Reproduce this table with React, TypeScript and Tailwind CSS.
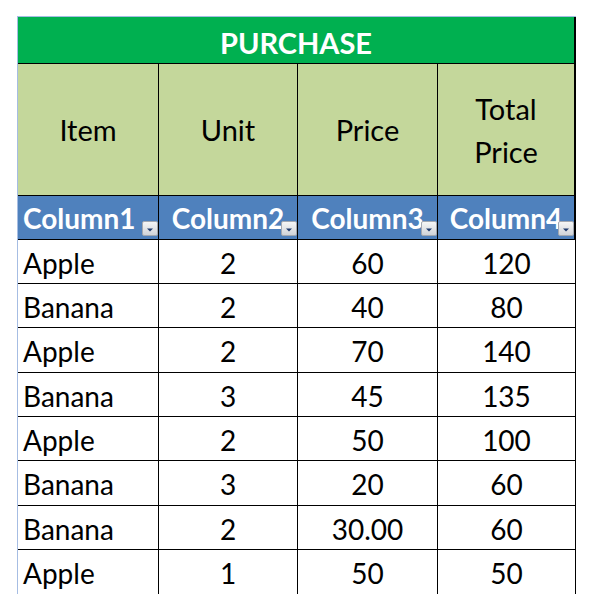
import React from "react";

const rows: [string, string, string, string][] = [
  ["Apple", "2", "60", "120"],
  ["Banana", "2", "40", "80"],
  ["Apple", "2", "70", "140"],
  ["Banana", "3", "45", "135"],
  ["Apple", "2", "50", "100"],
  ["Banana", "3", "20", "60"],
  ["Banana", "2", "30.00", "60"],
  ["Apple", "1", "50", "50"],
];

const heightClasses = [
  "h-[44px] border-b",
  "h-[44px] border-b",
  "h-[45px] border-b",
  "h-[44px] border-b",
  "h-[44px] border-b",
  "h-[45px] border-b",
  "h-[44px] border-b",
  "h-[44px]",
];

function Drop() {
  return (
    <svg
      className="absolute right-0 bottom-[3px]"
      width="16"
      height="15"
      viewBox="0 0 16 15"
    >
      <defs>
        <linearGradient id="dg" x1="0" y1="0" x2="0" y2="1">
          <stop offset="0" stopColor="#f7f7f7" />
          <stop offset="1" stopColor="#cfd3d8" />
        </linearGradient>
      </defs>
      <rect x="0.5" y="0.5" width="15" height="14" rx="1.5" fill="url(#dg)" stroke="#a3a8b0" />
      <path d="M5 7.5 L11 7.5 L8 10.5 Z" fill="#1f3b6e" />
    </svg>
  );
}

export default function App() {
  const font = { fontFamily: "Lato, 'Open Sans', sans-serif" };
  return (
    <div className="w-[596px] h-[616px] bg-white pt-[16px] pl-[17px]" style={font}>
      <div className="w-[559px] border-l border-t border-[#a6bde3]">
        {/* Title */}
        <div className="h-[47px] bg-[#00b050] border-b border-r-2 border-black flex items-center justify-center pt-[5px]">
          <span className="text-white font-bold text-[29px] leading-none">PURCHASE</span>
        </div>
        {/* Labels */}
        <div className="grid grid-cols-[141px_139px_140px_138px] h-[132px] bg-[#c4d79b] border-b border-black text-black text-[29px]">
          <div className="border-r border-black flex items-center justify-center">Item</div>
          <div className="border-r border-black flex items-center justify-center">Unit</div>
          <div className="border-r border-black flex items-center justify-center">Price</div>
          <div className="border-r-2 border-black flex items-center justify-center text-center leading-[43px]">
            Total
            <br />
            Price
          </div>
        </div>
        {/* Column header */}
        <div className="grid grid-cols-[141px_139px_140px_138px] h-[44px] bg-[#4f81bd] border-b border-black text-white font-bold text-[28px] leading-none">
          <div className="relative border-r border-black flex items-center pl-[5px] pt-[1px]">
            Column1
            <Drop />
          </div>
          <div className="relative border-r border-black flex items-center justify-center pt-[1px]">
            Column2
            <Drop />
          </div>
          <div className="relative border-r border-black flex items-center justify-center pt-[1px]">
            Column3
            <Drop />
          </div>
          <div className="relative border-r-2 border-black flex items-center justify-center pt-[1px]">
            Column4
            <Drop />
          </div>
        </div>
        {/* Data */}
        {rows.map((r, i) => (
          <div
            key={i}
            className={`grid grid-cols-[141px_139px_140px_138px] border-black text-black text-[28px] leading-none ${heightClasses[i]}`}
          >
            <div className="border-r border-black flex items-center pl-[5px] pt-[2px]">{r[0]}</div>
            <div className="border-r border-black flex items-center justify-center pt-[2px]">{r[1]}</div>
            <div className="border-r border-black flex items-center justify-center pt-[2px]">{r[2]}</div>
            <div className="border-r border-black flex items-center justify-center pt-[2px]">{r[3]}</div>
          </div>
        ))}
      </div>
    </div>
  );
}
